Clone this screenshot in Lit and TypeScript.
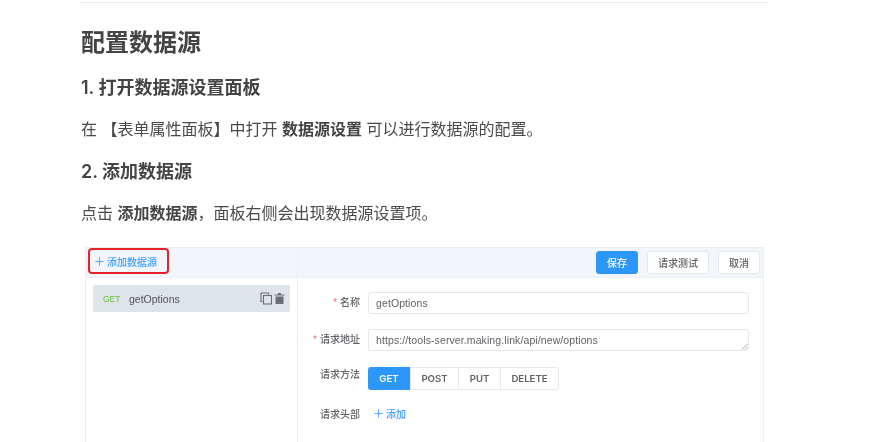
import { LitElement, html, css } from "lit";
import { customElement } from "lit/decorators.js";

const plus = html`<svg class="plus" viewBox="0 0 10 10"><path d="M5 0.5V9.5M0.5 5H9.5" stroke="currentColor" stroke-width="1" fill="none"/></svg>`;

@customElement("app-root")
export class AppRoot extends LitElement {
  static styles = css`
    :host { display: block; width: 875px; height: 442px; overflow: hidden; background: #fff;
      font-family: "Inter", "Noto Sans CJK SC", sans-serif; color: #2c3e50; }
    .page { width: 688px; margin-left: 81px; padding-top: 2px; box-sizing: border-box; filter: blur(0.3px); }
    hr { border: 0; height: 1px; background: #eaecef; margin: 0; }
    h2 { margin: 23px 0 0; font-size: 24px; line-height: 33px; font-weight: 600; color: #444; }
    h3 { margin: 16px 0 0; font-size: 18px; line-height: 25px; font-weight: 600; color: #444; }
    h3.second { margin-top: 17px; }
    p { margin: 16px 0 0; font-size: 16px; line-height: 26px; color: #4a4a4a; white-space: pre; }
    p b { font-weight: 600; color: #444; }
    .shot { margin: 21px 0 0 4px; width: 679px; height: 200px; border: 1px solid #ebeef5; border-bottom: 0; box-sizing: border-box;
      font-family: "Liberation Sans", "Noto Sans CJK SC", sans-serif;
      display: grid; grid-template-columns: 212px 1fr; grid-template-rows: 30px 1fr; font-size: 10px; font-weight: 500; color: #606266; }
    .bar { background: #f2f6fc; border-bottom: 1px solid #ebeef5; display: flex; align-items: center; }
    .left { border-right: 1px solid #ebeef5; position: relative; padding-left: 9px; }
    .add { color: #409eff; display: flex; align-items: center; gap: 3px; margin-bottom: 3px; }
    .plus { width: 9px; height: 9px; display: block; flex: none; }
    .mark { position: absolute; left: 2px; top: 0; width: 81px; height: 26px; border: 2px solid #e8202a; border-radius: 4px; box-sizing: border-box; }
    .right { justify-content: flex-end; gap: 9px; padding-right: 3px; }
    button { font: inherit; font-size: 10px; font-weight: 500; height: 23px; padding: 0 10px 1px; border: 1px solid #e4e7ed; border-radius: 3px; background: #fff; color: #606266; }
    button.primary { background: #2d97f9; border-color: #2d97f9; color: #fff; }
    .list { border-right: 1px solid #ebeef5; padding: 7px 7px 0; }
    .item { height: 27px; background: #dfe3ea; border-radius: 2px; display: flex; align-items: center; padding: 0 4px 0 10px; font-size: 10.5px; }
    .get { color: #67c23a; font-size: 8.5px; width: 26px; }
    .name { flex: 1; color: #505358; }
    .item svg { width: 13px; height: 13px; display: block; color: #6b6e73; }
    .form { padding: 14px 14px 0 0; display: flex; flex-direction: column; }
    .row { display: grid; grid-template-columns: 62px 1fr; column-gap: 8px; align-items: start; }
    .gap-a { margin-top: 15px; }
    .gap-b { margin-top: 16px; }
    .gap-c { margin-top: 14px; }
    .label { text-align: right; line-height: 22px; color: #606266; font-size: 10px; }
    .label.up { margin-top: -3px; }
    .label i { font-style: normal; color: #f56c6c; margin-right: 3px; }
    .input { height: 22px; border: 1px solid #e4e7ed; border-radius: 3px; box-sizing: border-box; line-height: 20px; padding: 0 7px; color: #606266; font-size: 10.5px; position: relative; letter-spacing: 0.1px; }
    .grip { position: absolute; right: 0; bottom: 0; width: 7px; height: 7px; }
    .seg { display: inline-flex; height: 23px; border: 1px solid #e4e7ed; border-radius: 3px; box-sizing: border-box; font-family: "Inter", sans-serif; font-size: 9.6px; font-weight: 600; line-height: 21px; }
    .seg span { border-left: 1px solid #e4e7ed; color: #606266; text-align: center; box-sizing: border-box; }
    .seg span:nth-child(1) { width: 41px; border-left: 0; }
    .seg span:nth-child(2) { width: 48px; }
    .seg span:nth-child(3) { width: 42px; }
    .seg span:nth-child(4) { width: 58px; }
    .seg .on { background: #2d97f9; color: #fff; margin: -1px 0 -1px -1px; padding: 1px 0; width: 42px !important; border-radius: 3px 0 0 3px; }
    .addhead { display: flex; align-items: center; gap: 3px; color: #409eff; height: 18px; padding-left: 6px; }
  `;

  render() {
    return html`<div class="page">
      <hr />
      <h2>配置数据源</h2>
      <h3>1. 打开数据源设置面板</h3>
      <p>在 【表单属性面板】中打开 <b>数据源设置</b> 可以进行数据源的配置。</p>
      <h3 class="second">2. 添加数据源</h3>
      <p>点击 <b>添加数据源</b>，面板右侧会出现数据源设置项。</p>
      <div class="shot">
        <div class="bar left"><span class="add">${plus}添加数据源</span><span class="mark"></span></div>
        <div class="bar right">
          <button class="primary">保存</button><button>请求测试</button><button>取消</button>
        </div>
        <div class="list">
          <div class="item">
            <span class="get">GET</span><span class="name">getOptions</span>
            <svg viewBox="0 0 13 13" fill="none" stroke="currentColor" stroke-width="1.1"><path d="M2.5 9.5H1V1H8.5V2.5"/><rect x="3.5" y="3.5" width="8" height="8.5"/></svg>
            <svg viewBox="0 0 13 13" fill="currentColor"><path d="M1.5 2.5H11.5V3.5H1.5ZM5 1H8V2.5H5ZM2.5 4.5H10.5V12H2.5Z"/></svg>
          </div>
        </div>
        <div class="form">
          <div class="row"><div class="label"><i>*</i>名称</div><div class="input">getOptions</div></div>
          <div class="row gap-a"><div class="label"><i>*</i>请求地址</div>
            <div class="input">https://tools-server.making.link/api/new/options
              <svg class="grip" viewBox="0 0 7 7" stroke="#888" stroke-width=".7"><path d="M1 6.5L6.5 1M4 6.5L6.5 4"/></svg></div></div>
          <div class="row gap-b"><div class="label up">请求方法</div>
            <div><div class="seg"><span class="on">GET</span><span>POST</span><span>PUT</span><span>DELETE</span></div></div></div>
          <div class="row gap-c"><div class="label">请求头部</div><div class="addhead">${plus}添加</div></div>
        </div>
      </div>
    </div>`;
  }
}
